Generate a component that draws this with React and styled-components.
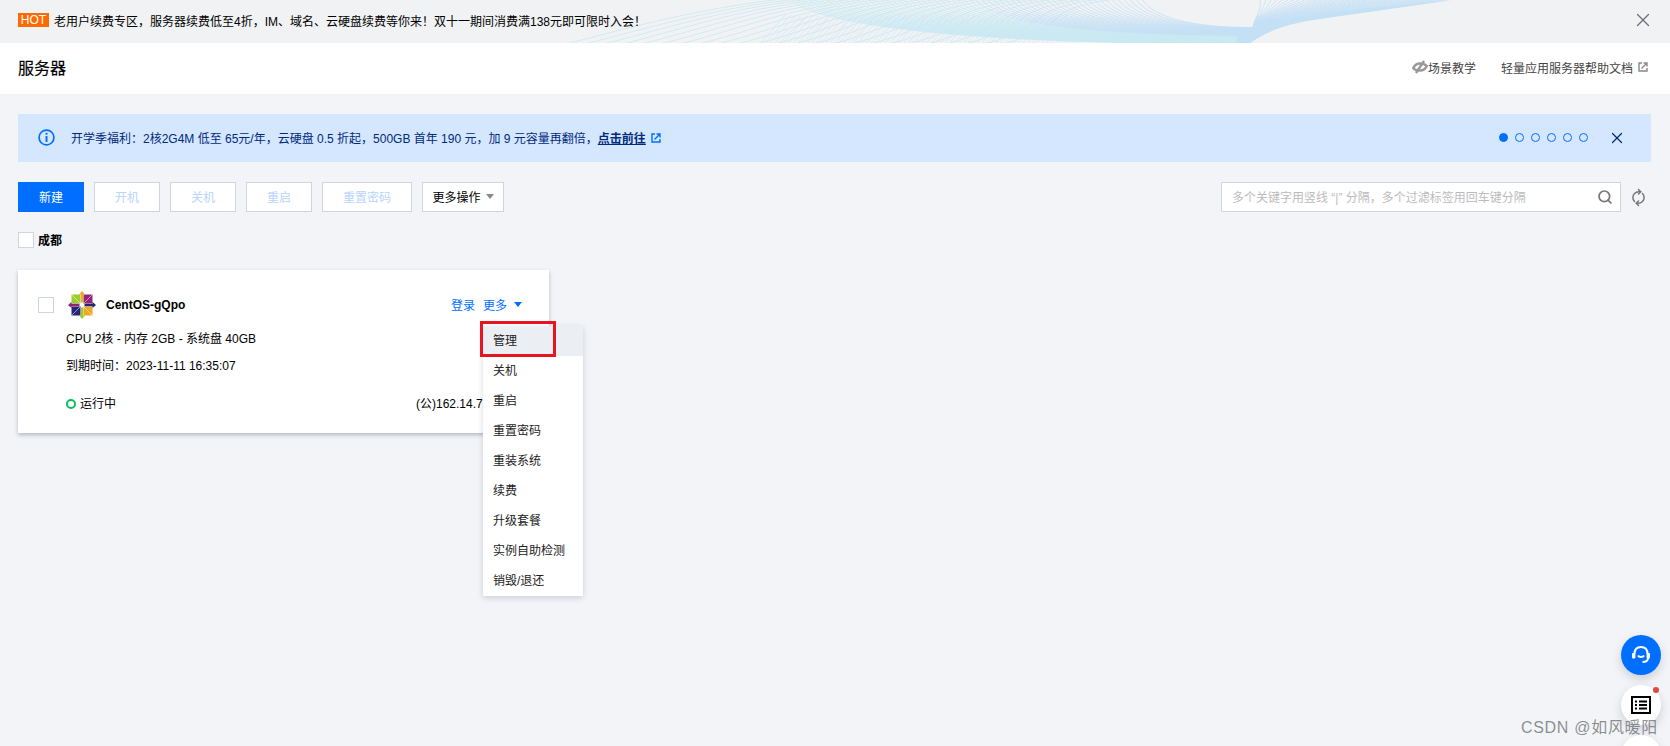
import React from 'react';
import styled, { createGlobalStyle } from 'styled-components';
import { X, Search, RefreshCw } from 'lucide-react';

const GlobalStyle = createGlobalStyle`
    html, body {
        margin: 0;
        padding: 0;
        background: #f2f4f8;
    }
    body {
        font-family: "Liberation Sans", "Noto Sans CJK SC", sans-serif;
        font-size: 12px;
        color: #000;
        overflow: hidden;
    }
`;

const Page = styled.div`
    width: 1670px;
    height: 746px;
    position: relative;
    overflow: hidden;
`;

const Banner = styled.div`
    height: 43px;
    box-sizing: border-box;
    background: #f1f2f4;
    position: relative;
    display: flex;
    align-items: center;
    padding: 0 16px 3px 18px;
    overflow: hidden;
`;

const WaveArt = styled.svg`
    position: absolute;
    left: 0;
    top: 0;
`;

const HotTag = styled.span`
    position: relative;
    background: #ff6a00;
    color: #fff;
    width: 31px;
    height: 14px;
    line-height: 14px;
    font-size: 12px;
    text-align: center;
    margin-right: 5px;
`;

const BannerText = styled.span`
    position: relative;
    flex: 1;
    font-size: 12px;
`;

const BannerClose = styled.span`
    position: relative;
    display: flex;
    color: #6b6f76;
`;

const Header = styled.div`
    height: 51px;
    box-sizing: border-box;
    background: #fff;
    display: flex;
    align-items: center;
    justify-content: space-between;
    padding: 0 22px 3px 18px;
`;

const Title = styled.h1`
    margin: 0;
    font-size: 16px;
    font-weight: 400;
    color: #000;
    -webkit-text-stroke: 0.2px #000;
`;

const HeaderLinks = styled.div`
    display: flex;
    align-items: center;
`;

const HeaderLink = styled.span`
    display: flex;
    align-items: center;
    color: #444;
    margin-left: 25px;
    gap: ${(p) => p.$gap || 0}px;
`;

const Content = styled.div`
    padding: 20px 19px 0 18px;
`;

const Notice = styled.div`
    height: 48px;
    box-sizing: border-box;
    background: #d5e7ff;
    color: #002a7c;
    display: flex;
    align-items: center;
    padding: 0 25px 1px 20px;
`;

const NoticeText = styled.span`
    margin-left: 16px;
    flex: 1;
    display: flex;
    align-items: center;
    white-space: pre;
`;

const NoticeLink = styled.a`
    font-weight: 700;
    color: #002a7c;
    text-decoration: underline;
    margin-right: 5px;
`;

const Dots = styled.div`
    display: flex;
    gap: 7px;
    margin-right: 20px;
`;

const Dot = styled.span`
    width: 9px;
    height: 9px;
    box-sizing: border-box;
    border-radius: 50%;
    border: 1px solid #006eff;
    background: ${(p) => (p.$active ? '#006eff' : 'transparent')};
`;

const Toolbar = styled.div`
    display: flex;
    align-items: center;
    margin-top: 20px;
    gap: 10px;
`;

const Button = styled.button`
    height: 30px;
    width: ${(p) => p.$width}px;
    box-sizing: border-box;
    padding: 0 0 2px;
    font: inherit;
    font-size: 12px;
    background: ${(p) => (p.$primary ? '#006eff' : '#fff')};
    color: ${(p) => (p.$primary ? '#fff' : p.$dark ? '#000' : '#b8d4fb')};
    border: 1px solid ${(p) => (p.$primary ? '#006eff' : '#cfd5de')};
    display: flex;
    align-items: center;
    justify-content: center;
    gap: 5px;
`;

const Caret = styled.span`
    width: 0;
    height: 0;
    border-left: ${(p) => p.$half || 4}px solid transparent;
    border-right: ${(p) => p.$half || 4}px solid transparent;
    border-top: 5px solid ${(p) => p.$color || '#888'};
`;

const SearchBox = styled.div`
    margin-left: auto;
    width: 400px;
    height: 30px;
    box-sizing: border-box;
    background: #fff;
    border: 1px solid #cfd5de;
    display: flex;
    align-items: center;
    justify-content: space-between;
    padding: 0 7px 1px 10px;
    color: #bbb;
`;

const RefreshIcon = styled.span`
    display: flex;
    color: #777;
    margin: 0 5px 0 0;
    transform: rotate(-45deg);
`;

const RegionRow = styled.label`
    display: flex;
    align-items: center;
    gap: 4px;
    margin-top: 20px;
    font-weight: 700;
    height: 16px;
`;

const RegionName = styled.span`
    padding-bottom: 2px;
`;

const Checkbox = styled.span`
    width: 16px;
    height: 16px;
    box-sizing: border-box;
    background: #fff;
    border: 1px solid #cfd5de;
    flex: none;
`;

const Card = styled.div`
    position: relative;
    margin-top: 22px;
    width: 531px;
    height: 163px;
    box-sizing: border-box;
    background: #fff;
    box-shadow: 0 2px 4px rgba(54, 58, 80, 0.32);
    padding: 21px 27px 0 20px;
`;

const CardHead = styled.div`
    display: flex;
    align-items: center;
    height: 28px;
`;

const LogoBox = styled.span`
    display: flex;
    margin-left: 14px;
`;

const Name = styled.span`
    font-weight: 700;
    margin-left: 10px;
    flex: 1;
`;

const CardAction = styled.span`
    color: #006eff;
    margin-left: 8px;
    padding-bottom: 1px;
    display: flex;
    align-items: center;
    gap: 7px;
`;

const CardBody = styled.div`
    padding-left: 28px;
`;

const Spec = styled.div`
    line-height: 26px;
    margin-top: ${(p) => p.$top || 0}px;
`;

const StatusRow = styled.div`
    display: flex;
    justify-content: space-between;
    align-items: center;
    margin-top: 12px;
    line-height: 26px;
`;

const Status = styled.span`
    display: flex;
    align-items: center;
    gap: 4px;
`;

const StatusDot = styled.span`
    width: 10px;
    height: 10px;
    box-sizing: border-box;
    border-radius: 50%;
    border: 2px solid #0abf5b;
`;

const Ip = styled.span`
    white-space: nowrap;
    width: 106px;
`;

const Menu = styled.ul`
    position: absolute;
    left: 465px;
    top: 56px;
    width: 100px;
    margin: 0;
    padding: 0;
    list-style: none;
    background: #fff;
    box-shadow: 0 2px 6px rgba(54, 58, 80, 0.2);
`;

const MenuItem = styled.li`
    height: 30px;
    line-height: 30px;
    padding-left: 10px;
    color: #222;
    background: ${(p) => (p.$active ? '#ebeef2' : 'transparent')};
`;

const Highlight = styled.div`
    position: absolute;
    left: 462px;
    top: 51px;
    width: 76px;
    height: 36px;
    box-sizing: border-box;
    border: 3px solid #e8141f;
`;

const FloatStack = styled.div`
    position: absolute;
    left: 1621px;
    top: 635px;
    display: flex;
    flex-direction: column;
    gap: 10px;
`;

const FloatButton = styled.div`
    position: relative;
    width: 40px;
    height: 40px;
    border-radius: 50%;
    background: ${(p) => (p.$primary ? '#006eff' : '#fff')};
    box-shadow: 0 4px 10px rgba(54, 58, 80, 0.2);
    display: flex;
    align-items: center;
    justify-content: center;
    flex: none;
`;

const RedDot = styled.span`
    position: absolute;
    right: 2px;
    top: 2px;
    width: 6px;
    height: 6px;
    border-radius: 50%;
    background: #e54545;
`;

const Watermark = styled.div`
    position: absolute;
    right: 12px;
    top: 717px;
    font-size: 16px;
    line-height: 21px;
    color: rgba(100, 100, 100, 0.72);
    letter-spacing: 0.7px;
`;

const CYAN = '#c9e8f3';
const BLUE = '#c4e0f5';

const buildWaves = () => {
    const paths = [];
    // long rising strands on the left
    for (let i = 0; i < 24; i++) {
        const x = 566 + i * 19;
        const end = 790 + i * 14.5;
        paths.push({ d: `M${x} 44 C${x + 70} 26 ${end - 90} 8 ${end} -2`, color: CYAN });
    }
    // short hatching low down in the middle
    for (let i = 0; i < 70; i++) {
        const x = 760 + i * 4.6;
        paths.push({ d: `M${x} 44 L${x + 26} ${14 + (i % 5)}`, color: CYAN, width: 0.6 });
    }
    // falling strands that narrow towards the knot
    for (let i = 0; i < 60; i++) {
        const x = 790 + i * 5.95;
        const endY = 44 - i * 0.28;
        const ctrl = 1192 - (59 - i) * 5;
        paths.push({
            d: `M${x} -2 C${x + 12} ${16 + i * 0.03} ${ctrl} ${endY} 1252 ${endY}`,
            color: i > 30 ? BLUE : CYAN,
        });
    }
    // fan out to the top right
    for (let i = 0; i < 34; i++) {
        const t = i / 33;
        const x = 1260 + t * 193;
        paths.push({
            d: `M1253 ${27 - t * 1} C${1256 + t * 10} ${14 + t * 10} ${1262 + t * 70} ${10 + t * 6} ${x} -1`,
            color: BLUE,
        });
    }
    return paths;
};

const waves = buildWaves();

const menuItems = ['管理', '关机', '重启', '重置密码', '重装系统', '续费', '升级套餐', '实例自助检测', '销毁/退还'];

const CentosLogo = () => (
    <svg width="28" height="28" viewBox="0 0 28 28">
        <rect x="3.5" y="3.5" width="9" height="9" fill="#9ccd2a" />
        <rect x="15.5" y="3.5" width="9" height="9" fill="#932279" />
        <rect x="15.5" y="15.5" width="9" height="9" fill="#efa724" />
        <rect x="3.5" y="15.5" width="9" height="9" fill="#262577" />
        <path d="M14 0 L17 3.5 H15.2 V11.5 H12.8 V3.5 H11 Z" fill="#efa724" />
        <path d="M28 14 L24.5 17 V15.2 H16.5 V12.8 H24.5 V11 Z" fill="#262577" />
        <path d="M14 28 L11 24.5 H12.8 V16.5 H15.2 V24.5 H17 Z" fill="#9ccd2a" />
        <path d="M0 14 L3.5 11 V12.8 H11.5 V15.2 H3.5 V17 Z" fill="#932279" />
        <path d="M4 4 L12 12 M24 4 L16 12 M24 24 L16 16 M4 24 L12 16" stroke="#fff" strokeWidth="0.7" opacity="0.75" />
    </svg>
);

const ExternalIcon = ({ color }) => (
    <svg width="10" height="10" viewBox="0 0 10 10" fill="none" stroke={color} strokeWidth="1.4">
        <path d="M4 1 H1 V9 H9 V6" />
        <path d="M3.5 6.5 L8.5 1.5 M5.5 1 H9 V4.5" />
    </svg>
);

const EyeOffIcon = () => (
    <svg width="16" height="14" viewBox="0 0 16 14" fill="none" stroke="#999" strokeWidth="2.4">
        <path d="M1.2 8 C3 4.5 6 3.5 8 3.5 C10 3.5 13 4 14.8 6 C13 10 10 10.5 8 10.5 C6 10.5 3 10.5 1.2 8 Z" />
        <path d="M12 1 L4 13" />
    </svg>
);

const InfoIcon = () => (
    <svg width="17" height="17" viewBox="0 0 16 16" fill="none">
        <circle cx="8" cy="8" r="7" stroke="#006eff" strokeWidth="1.6" />
        <rect x="7.1" y="3.6" width="1.8" height="1.8" fill="#006eff" />
        <rect x="7.1" y="6.6" width="1.8" height="5.6" fill="#006eff" />
    </svg>
);

const HeadsetIcon = () => (
    <svg width="22" height="22" viewBox="0 0 22 22" fill="none" stroke="#fff" strokeWidth="2">
        <path d="M4.5 10 C4.5 5.5 7 3 11 3 C15 3 17.5 5.5 17.5 10" />
        <rect x="2" y="9" width="3.4" height="5.6" rx="1" fill="#fff" stroke="none" />
        <rect x="16.6" y="9" width="3.4" height="5.6" rx="1" fill="#fff" stroke="none" />
        <path d="M8 11.5 C9 13.5 13 13.5 14 11.5" />
        <path d="M18 14 C18 17 16 18 12.5 18" />
    </svg>
);

const ListIcon = () => (
    <svg width="20" height="18" viewBox="0 0 20 18" fill="none" stroke="#000" strokeWidth="2">
        <rect x="1" y="1" width="18" height="16" />
        <path d="M4 5.5 H6 M8 5.5 H16 M4 9 H6 M8 9 H16 M4 12.5 H6 M8 12.5 H16" />
    </svg>
);

const App = () => (
    <Page>
        <GlobalStyle />
        <Banner>
            <WaveArt width="1670" height="43" viewBox="0 0 1670 43" fill="none">
                {waves.map((w, i) => (
                    <path key={i} d={w.d} stroke={w.color} strokeWidth={w.width || 0.8} />
                ))}
                <path
                    d="M1250 43 C1268 31 1285 24 1320 19 L1453 0 L1380 7 C1330 12 1290 19 1253 27 L1238 30 L1236 43 Z"
                    fill={BLUE}
                />
            </WaveArt>
            <HotTag>HOT</HotTag>
            <BannerText>老用户续费专区，服务器续费低至4折，IM、域名、云硬盘续费等你来！双十一期间消费满138元即可限时入会！</BannerText>
            <BannerClose>
                <X size={22} strokeWidth={1.3} />
            </BannerClose>
        </Banner>
        <Header>
            <Title>服务器</Title>
            <HeaderLinks>
                <HeaderLink>
                    <EyeOffIcon />
                    场景教学
                </HeaderLink>
                <HeaderLink $gap={5}>
                    轻量应用服务器帮助文档
                    <ExternalIcon color="#888" />
                </HeaderLink>
            </HeaderLinks>
        </Header>
        <Content>
            <Notice>
                <InfoIcon />
                <NoticeText>
                    开学季福利：2核2G4M 低至 65元/年，云硬盘 0.5 折起，500GB 首年 190 元，加 9 元容量再翻倍，
                    <NoticeLink>点击前往</NoticeLink>
                    <ExternalIcon color="#006eff" />
                </NoticeText>
                <Dots>
                    {[0, 1, 2, 3, 4, 5].map((i) => (
                        <Dot key={i} $active={i === 0} />
                    ))}
                </Dots>
                <X size={18} strokeWidth={1.6} color="#002a7c" />
            </Notice>
            <Toolbar>
                <Button $primary $width={66}>新建</Button>
                <Button $width={66}>开机</Button>
                <Button $width={66}>关机</Button>
                <Button $width={66}>重启</Button>
                <Button $width={90}>重置密码</Button>
                <Button $dark $width={82}>
                    更多操作
                    <Caret />
                </Button>
                <SearchBox>
                    多个关键字用竖线 “|” 分隔，多个过滤标签用回车键分隔
                    <Search size={16} strokeWidth={2.6} color="#777" />
                </SearchBox>
                <RefreshIcon>
                    <RefreshCw size={15} strokeWidth={2.4} />
                </RefreshIcon>
            </Toolbar>
            <RegionRow>
                <Checkbox />
                <RegionName>成都</RegionName>
            </RegionRow>
            <Card>
                <CardHead>
                    <Checkbox />
                    <LogoBox>
                        <CentosLogo />
                    </LogoBox>
                    <Name>CentOS-gQpo</Name>
                    <CardAction>登录</CardAction>
                    <CardAction>
                        更多
                        <Caret $half={4.5} $color="#006eff" />
                    </CardAction>
                </CardHead>
                <CardBody>
                    <Spec $top={7}>CPU 2核 - 内存 2GB - 系统盘 40GB</Spec>
                    <Spec $top={1}>到期时间：2023-11-11 16:35:07</Spec>
                    <StatusRow>
                        <Status>
                            <StatusDot />
                            运行中
                        </Status>
                        <Ip>(公)162.14.7</Ip>
                    </StatusRow>
                </CardBody>
                <Menu>
                    {menuItems.map((item, i) => (
                        <MenuItem key={item} $active={i === 0}>{item}</MenuItem>
                    ))}
                </Menu>
                <Highlight />
            </Card>
        </Content>
        <FloatStack>
            <FloatButton $primary>
                <HeadsetIcon />
            </FloatButton>
            <FloatButton>
                <ListIcon />
                <RedDot />
            </FloatButton>
            <FloatButton />
        </FloatStack>
        <Watermark>CSDN @如风暖阳</Watermark>
    </Page>
);

export default App;
